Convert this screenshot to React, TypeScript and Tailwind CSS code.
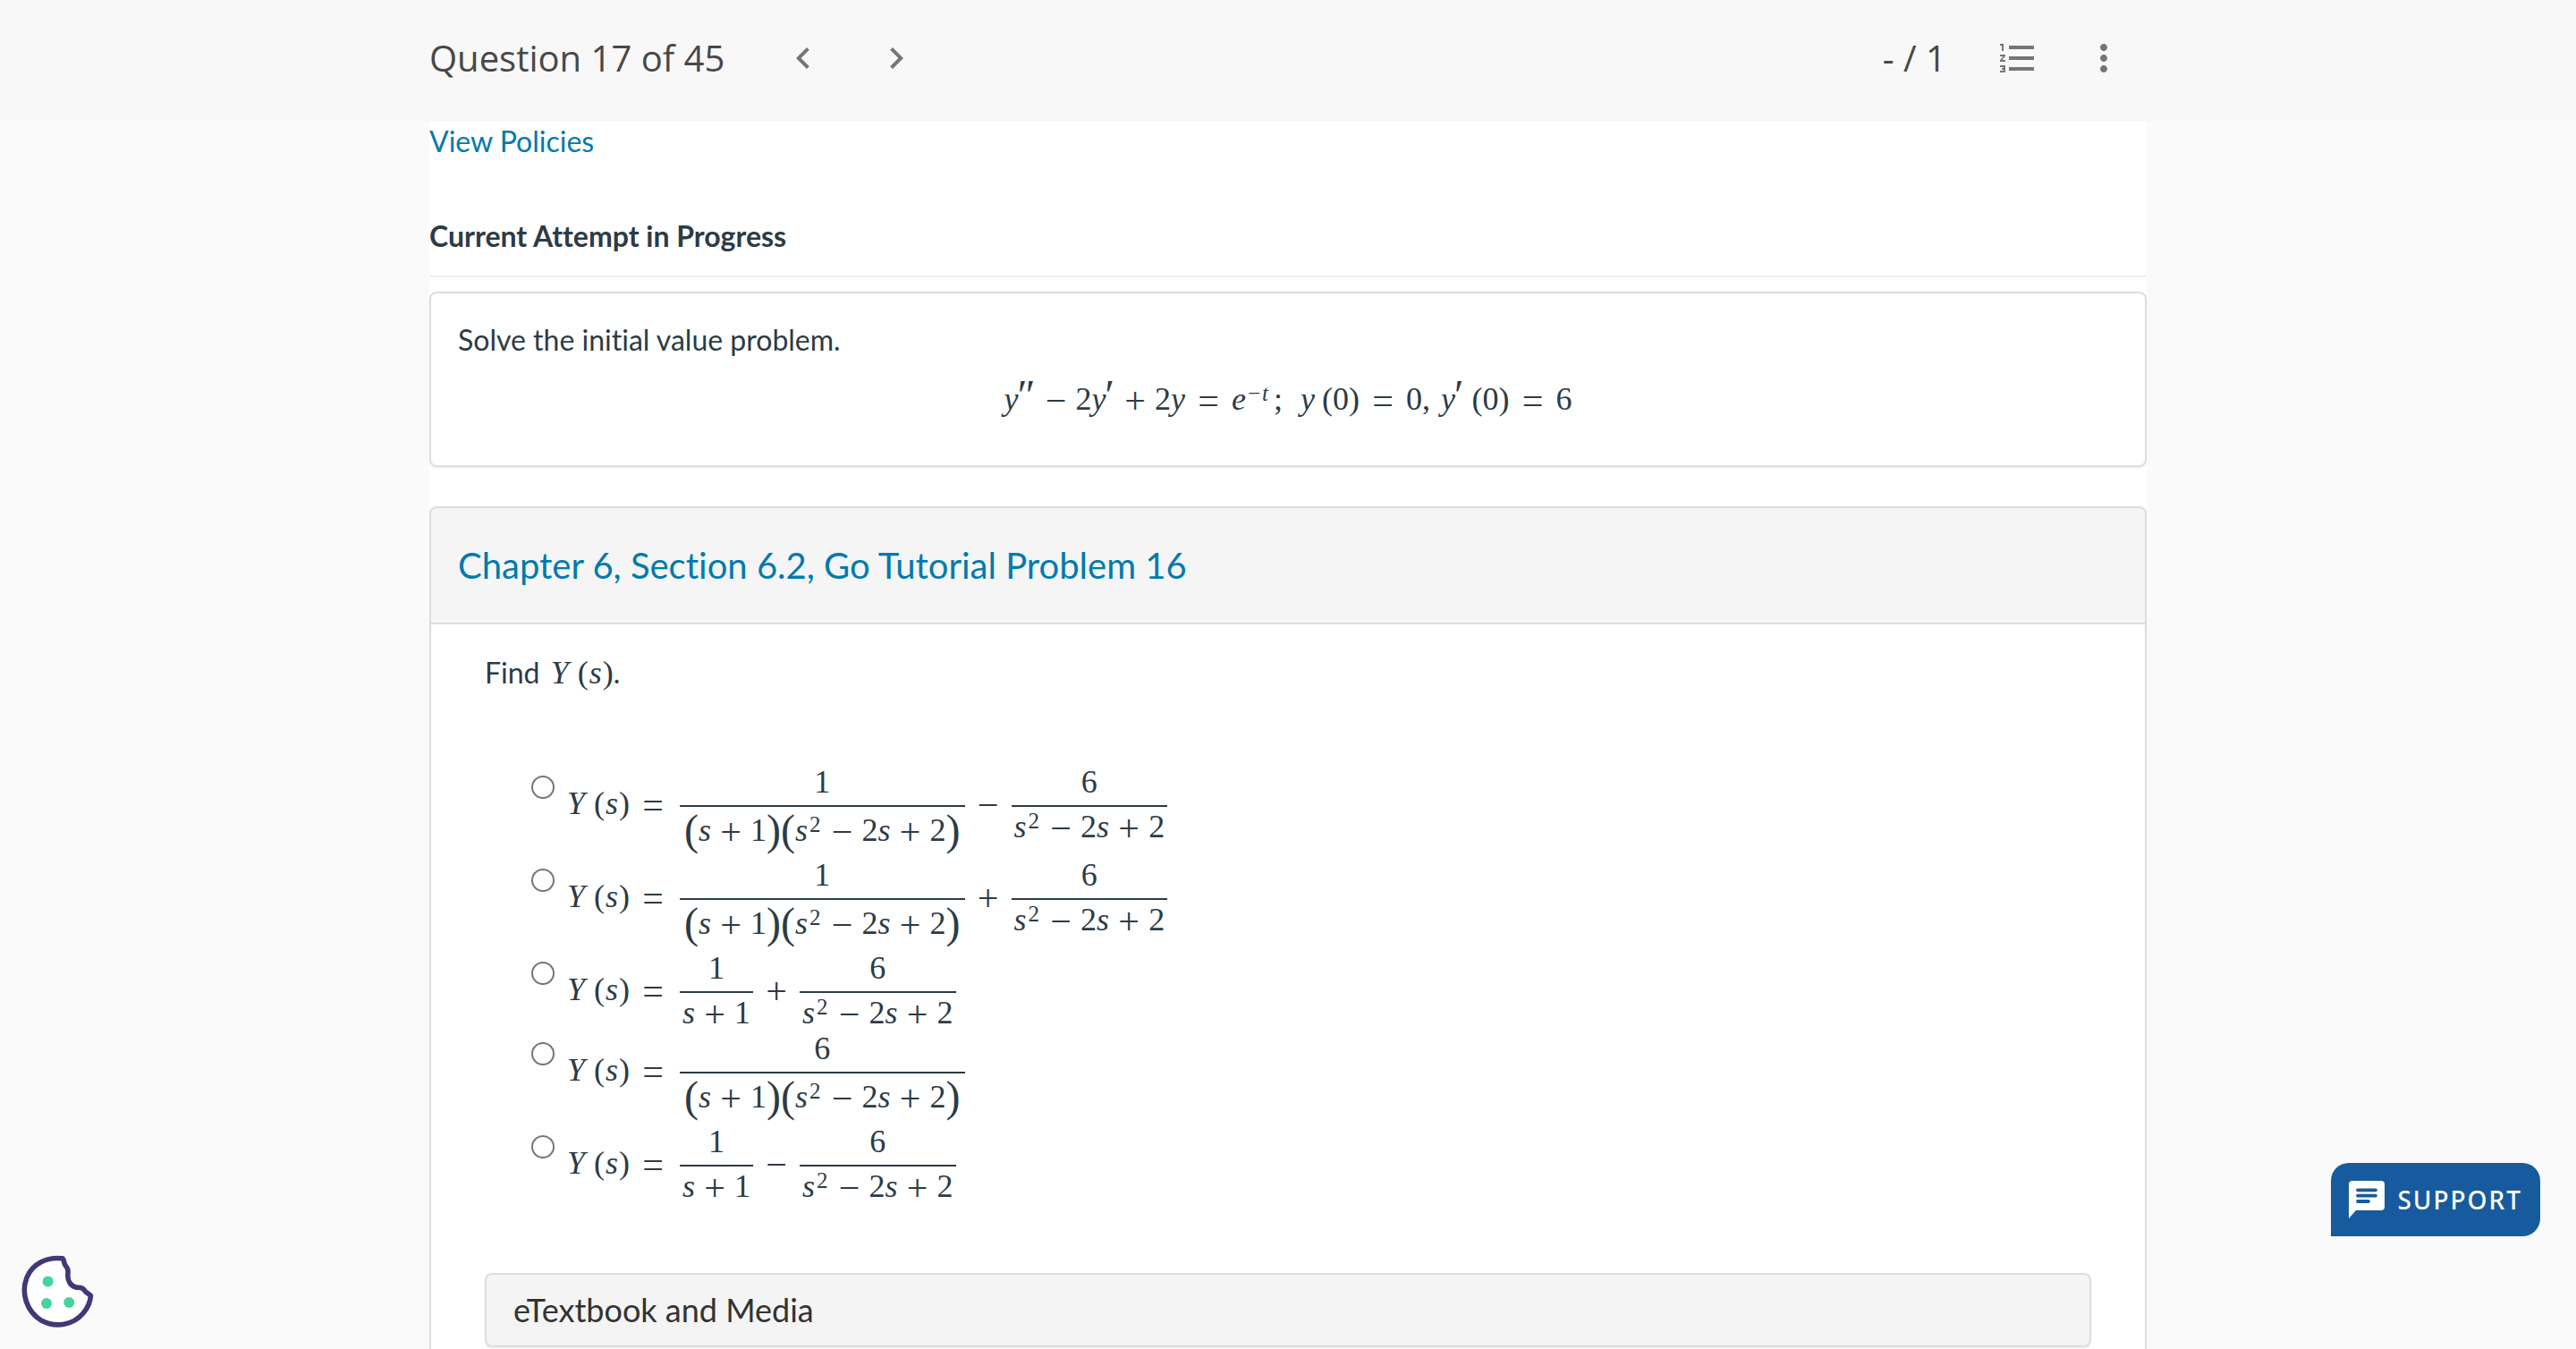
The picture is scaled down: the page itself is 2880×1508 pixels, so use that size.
import type { ReactNode } from "react";
import {
  MdChevronLeft,
  MdChevronRight,
  MdFormatListNumbered,
  MdMoreVert,
} from "react-icons/md";

const MATH = "whitespace-nowrap font-['Liberation_Serif',serif] text-[36px]";
const OPERATOR = "inline-block text-center align-[-4px] text-[42px] leading-[36px]";
const ICON_BUTTON = "flex size-24 items-center justify-center text-[#757575]";

function Var({ children }: { children: ReactNode }) {
  return <i>{children}</i>;
}

// binary operator: + or −
function Bin({ children }: { children: ReactNode }) {
  return <span className={`w-[44px] ${OPERATOR}`}>{children}</span>;
}

function Eq() {
  return <span className={`w-[52px] ${OPERATOR}`}>=</span>;
}

function Sup({ children }: { children: ReactNode }) {
  return <span className="mx-0.5 inline-block align-[10px] text-[25px] leading-[25px]">{children}</span>;
}

function Prime({ children }: { children: ReactNode }) {
  return <i className="-ml-1 mr-1 text-[48px] leading-[30px]">{children}</i>;
}

function BigParen({ children }: { children: ReactNode }) {
  return <span className="inline-block w-4 text-center align-[-4px] text-[48px] leading-[36px]">{children}</span>;
}

function Frac({ top, children, tall }: { top: string; children: ReactNode; tall?: boolean }) {
  return (
    <span className="mx-1 flex flex-col text-center">
      <span className="pb-2 leading-[36px]">{top}</span>
      <span className="h-0.5 bg-[#2d3b45]" />
      <span className={tall ? "px-[5px] pb-1.5 leading-[52px]" : "px-[3px] leading-[44px]"}>{children}</span>
    </span>
  );
}

function Quadratic() {
  return (
    <>
      <Var>s</Var>
      <Sup>2</Sup>
      <Bin>−</Bin>2<Var>s</Var>
      <Bin>+</Bin>2
    </>
  );
}

function Product({ top }: { top: string }) {
  return (
    <Frac top={top} tall>
      <BigParen>(</BigParen>
      <Var>s</Var>
      <Bin>+</Bin>1<BigParen>)</BigParen>
      <BigParen>(</BigParen>
      <Quadratic />
      <BigParen>)</BigParen>
    </Frac>
  );
}

function Linear() {
  return (
    <Frac top="1">
      <Var>s</Var>
      <Bin>+</Bin>1
    </Frac>
  );
}

function YofS() {
  return (
    <>
      <Var>Y</Var>
      <span className="ml-2.5 mr-px">(</span>
      <Var>s</Var>
      <span className="ml-px">)</span>
    </>
  );
}

function Between({ children }: { children: ReactNode }) {
  return (
    <span className="pt-5 leading-[44px]">
      <Bin>{children}</Bin>
    </span>
  );
}

const OPTIONS: { id: string; body: ReactNode }[] = [
  {
    id: "a",
    body: (
      <>
        <Product top="1" />
        <Between>−</Between>
        <Frac top="6"><Quadratic /></Frac>
      </>
    ),
  },
  {
    id: "b",
    body: (
      <>
        <Product top="1" />
        <Between>+</Between>
        <Frac top="6"><Quadratic /></Frac>
      </>
    ),
  },
  {
    id: "c",
    body: (
      <>
        <Linear />
        <Between>+</Between>
        <Frac top="6"><Quadratic /></Frac>
      </>
    ),
  },
  { id: "d", body: <Product top="6" /> },
  {
    id: "e",
    body: (
      <>
        <Linear />
        <Between>−</Between>
        <Frac top="6"><Quadratic /></Frac>
      </>
    ),
  },
];

function Cookie() {
  return (
    <svg viewBox="0 0 84 84" className="size-[84px]" aria-hidden="true">
      <path
        d="M48 4.8C30 2.6 14 11 8 26C1 44 8 64 24 74C41 83 60 79 71 66C76 60 79 53 79.4 46.5C77 43.5 74 43.5 72.5 40.5C70 36.5 67 37.6 64 37.2C57 36 53.5 30 53.8 23.5C53.8 20 55 17.5 52.5 14.5C48.5 10.5 50.5 7 48 4.8Z"
        fill="#fff"
        stroke="#3f3978"
        strokeWidth="5.6"
        strokeLinejoin="round"
      />
      <circle cx="31.6" cy="30.6" r="6" fill="#44d49e" />
      <circle cx="30" cy="55" r="6" fill="#44d49e" />
      <circle cx="55.2" cy="54" r="6" fill="#44d49e" />
    </svg>
  );
}

export default function App() {
  return (
    <div className="flex h-screen flex-col overflow-hidden bg-[#fafafa] font-[Lato,sans-serif] text-[32px] leading-[40px] text-[#2d3b45] [font-variant-ligatures:none]">
      <header className="shrink-0 bg-[#f8f8f8] pb-1.5">
        <div className="mx-auto flex h-[130px] w-2/3 items-center font-['Open_Sans',sans-serif] text-[40px] text-[#484848]">
          <h1>Question 17 of 45</h1>
          <nav className="ml-10 flex gap-2">
            <button type="button" aria-label="Previous question" className={ICON_BUTTON}>
              <MdChevronLeft className="size-12" />
            </button>
            <button type="button" aria-label="Next question" className={ICON_BUTTON}>
              <MdChevronRight className="size-12" />
            </button>
          </nav>
          <span className="ml-auto mr-8">- / 1</span>
          <button type="button" aria-label="Question list" className={ICON_BUTTON}>
            <MdFormatListNumbered className="size-12" />
          </button>
          <button type="button" aria-label="More options" className={ICON_BUTTON}>
            <MdMoreVert className="size-12" />
          </button>
        </div>
      </header>

      <main className="mx-auto min-h-0 w-2/3 flex-1 overflow-hidden bg-white pt-0.5">
        <a href="#policies" className="block w-fit text-[#007aad]">View Policies</a>
        <h2 className="mt-[66px] border-b-2 border-[#eeeeee] pb-6 font-bold">Current Attempt in Progress</h2>

        <section className="mt-4 rounded-lg border-2 border-[#dddddd] px-[30px] pb-[52px] pt-8 shadow-[0_2px_2px_rgba(0,0,0,0.05)]">
          <p>Solve the initial value problem.</p>
          <p className={`mt-6 text-center leading-[44px] ${MATH}`}>
            <Var>y</Var>
            <Prime>″</Prime>
            <Bin>−</Bin>2<Var>y</Var>
            <Prime>′</Prime>
            <Bin>+</Bin>2<Var>y</Var>
            <Eq />
            <Var>e</Var>
            <Sup>−<i className="ml-0.5">t</i></Sup>
            <span className="ml-1 mr-5">;</span>
            <Var>y</Var>
            <span className="ml-2">(0)</span>
            <Eq />
            <span className="mr-3">0,</span>
            <Var>y</Var>
            <Prime>′</Prime>
            <span className="ml-2">(0)</span>
            <Eq />6
          </p>
        </section>

        <section className="mt-11 rounded-t-lg border-2 border-[#dddddd]">
          <h2 className="rounded-t-md border-b-2 border-[#dddddd] bg-[#f5f5f5] px-[30px] py-10 text-[40px] leading-[48px] text-[#007aad]">
            <a href="#tutorial">Chapter 6, Section 6.2, Go Tutorial Problem 16</a>
          </h2>
          <div className="px-[60px] pb-20 pt-[34px]">
            <p className="h-10">
              Find <span className={`ml-1 ${MATH}`}><YofS /></span>.
            </p>
            <fieldset className="mt-[84px] pl-[52px]">
              {OPTIONS.map((option) => (
                <label key={option.id} className={`flex w-fit items-start ${MATH}`}>
                  <input
                    type="radio"
                    name="transform"
                    value={option.id}
                    className="mr-3.5 mt-[11px] size-[26px] appearance-none rounded-full border-2 border-[#767676] bg-white checked:bg-[#767676]"
                  />
                  <span className="pt-5 leading-[44px]"><YofS /><Eq /></span>
                  {option.body}
                </label>
              ))}
            </fieldset>
            <button
              type="button"
              className="mt-[75px] block w-full rounded-lg border-2 border-[#dcdddd] bg-[#f4f4f4] px-[30px] py-[18px] text-left text-[36px] leading-[43px] text-[#333333] shadow-[0_2px_2px_rgba(0,0,0,0.05)]"
            >
              eTextbook and Media
            </button>
          </div>
        </section>
      </main>

      <button type="button" aria-label="Cookie settings" className="fixed bottom-[22px] left-[22px]">
        <Cookie />
      </button>

      <button
        type="button"
        className="fixed bottom-[126px] right-10 flex h-[82px] items-center gap-3.5 rounded-[20px] rounded-bl-none bg-[#175b9e] px-5 font-['Noto_Sans',sans-serif] text-[28px] font-medium tracking-[2px] text-white"
      >
        <svg viewBox="0 0 40 42" className="h-[42px] w-10" aria-hidden="true">
          <path d="M4 0H36Q40 0 40 4V29Q40 33 36 33H8L0 42V4Q0 0 4 0Z" fill="#fff" />
          <path d="M10 10.3H30M10 16.6H30M10 23H22" stroke="#175b9e" strokeWidth="3.8" strokeLinecap="round" />
        </svg>
        SUPPORT
      </button>
    </div>
  );
}
